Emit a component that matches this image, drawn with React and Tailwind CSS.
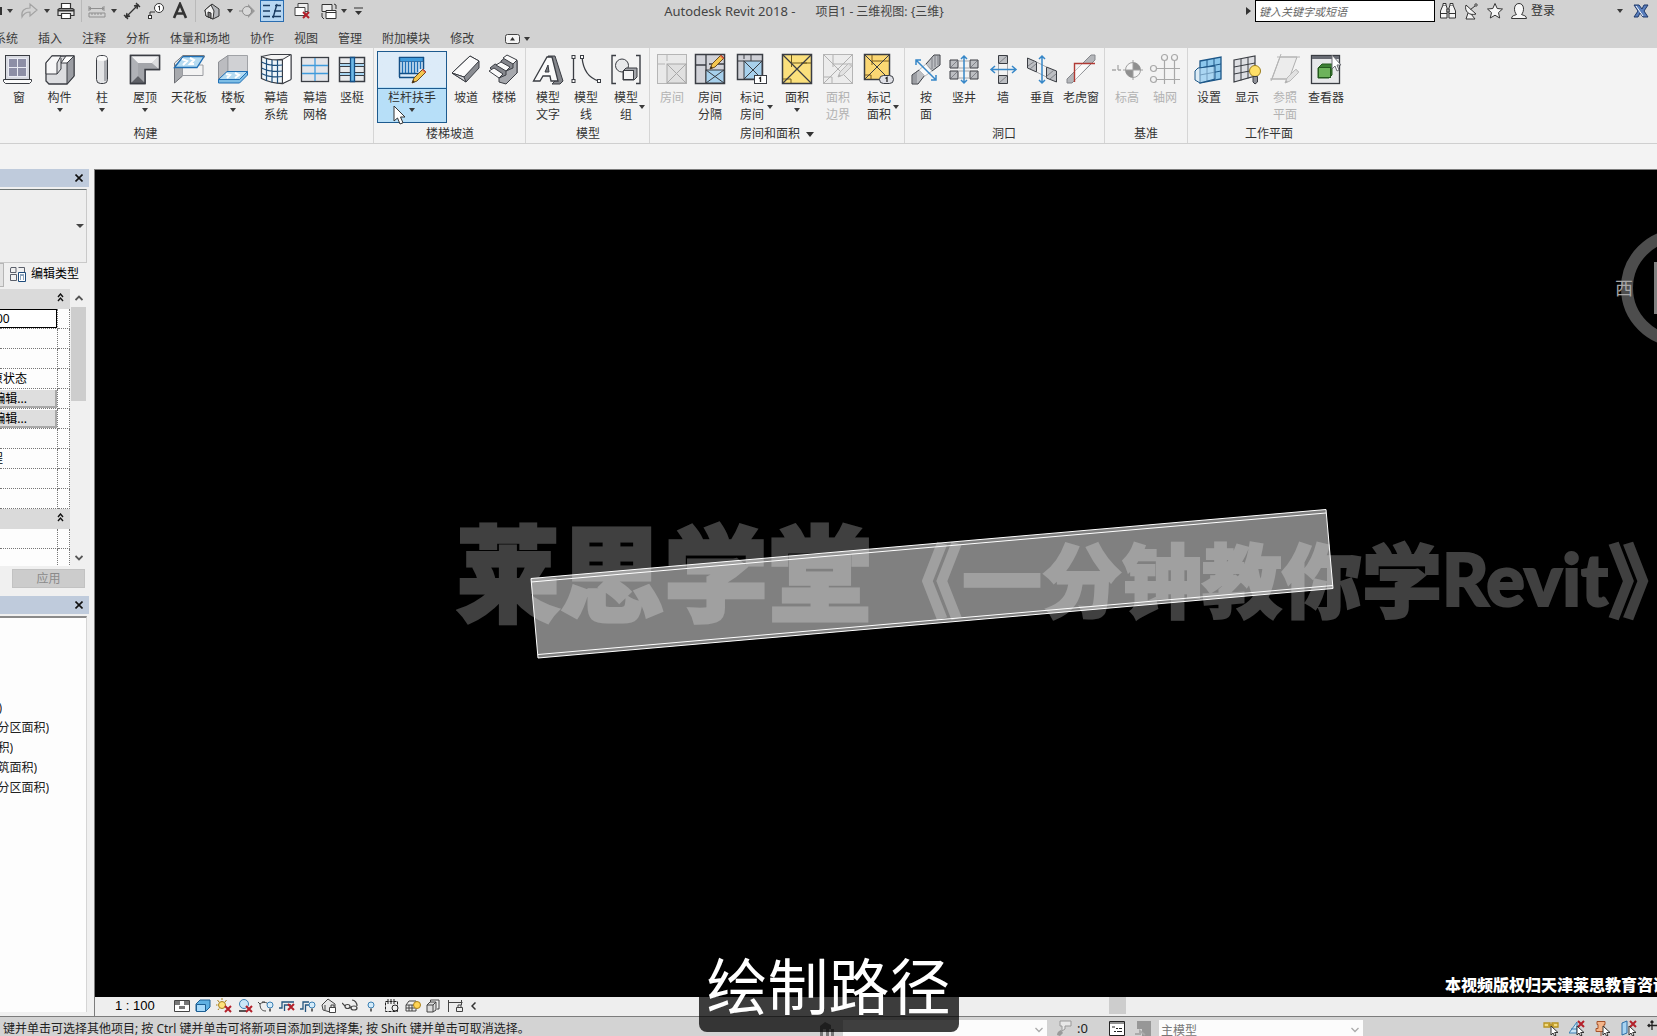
import React from "react";

const dark = "#3a3d43";
const blue = "#1f6fb5";
const pale = "#b5dbf2";

const Caret = ({ className = "text-[#3a3a3a]" }) => (
  <svg width="6" height="4" viewBox="0 0 6 4" className={className} fill="currentColor" aria-hidden="true">
    <path d="M0 0h6L3 4z" />
  </svg>
);

const Pencil = ({ x = 0, y = 0, gray }) => (
  <g transform={`translate(${x} ${y})`}>
    <path d="M1 15l2-5L12 1l3 3-9 9z" fill={gray ? "#e2e2e2" : "#f3c64f"} stroke={gray ? "#b9b9b9" : "#6b4a1e"} strokeWidth="1" />
    <path d="M11 2l1-1 3 3-1 1z" fill={gray ? "#cfcfcf" : "#e2574c"} />
    <path d="M1 15l1-3 2 2z" fill={gray ? "#b0b0b0" : "#3a2a16"} />
  </g>
);

// cruz de habitación: marco + aspa
const RoomCross = ({ x, y, w, h, fill, stroke }) => (
  <g stroke={stroke} strokeWidth="1">
    <rect x={x} y={y} width={w} height={h} fill={fill} />
    <path d={`M${x} ${y}l${w} ${h}M${x + w} ${y}l${-w} ${h}`} fill="none" />
  </g>
);

const Hatch = ({ d }) => <path d={d} fill="#bcbec2" stroke={dark} strokeWidth="1" />;

const art = {
  window: (
    <>
      <rect x="2.5" y="2.5" width="24" height="24" fill="#d9dbe2" stroke={dark} />
      <rect x="5.5" y="5.5" width="18" height="18" fill="#8d8fa6" stroke="#e9ebf3" />
      <path d="M14.500 6v17M6 14.500h17" stroke="#e9ebf3" />
      <path d="M.5 26.500h28v2l-2 2h-24l-2-2z" fill="#fafafa" stroke={dark} />
    </>
  ),
  component: (
    <>
      <path d="M2 10L8 3h22v20l-7 8H5l-3-3z" fill="#dcdde0" stroke={dark} strokeWidth="1.300" />
      <path d="M2 10L8 3h9l-4 7v11H2z" fill="#f6f6f7" stroke={dark} />
      <path d="M13 21l4-5V5" fill="none" stroke={dark} />
      <path d="M23 31V10l7-7v20z" fill="#9b9da3" stroke={dark} />
      <path d="M17 10l5-7h8l-7 7z" fill="#fff" stroke={dark} />
    </>
  ),
  column: (
    <>
      <rect x="10.500" y="2.500" width="11" height="28" rx="4" fill="#e3e4e6" stroke={dark} />
      <path d="M18 6h3v22h-3z" fill="#a9abb0" />
      <ellipse cx="16" cy="5.500" rx="5" ry="2.500" fill="#fafafa" />
    </>
  ),
  roof: (
    <>
      <path d="M1.500 2.500h29v14H16v14H1.500z" fill="#c3c5c9" stroke={dark} strokeWidth="1.400" />
      <path d="M2 3l7 7h14l7-7z" fill="#f3f3f4" />
      <path d="M2 3l7 7v13l-7 7z" fill="#b0b2b7" />
      <path d="M9 10h14l7 6H16v14l-7-7z" fill="#a3a5aa" />
      <path d="M23 10l7-7v13z" fill="#dddee0" />
      <path d="M2 30l7-7 7 7z" fill="#5f6167" />
      <path d="M1.500 2.500h29v14H16v14H1.500z" fill="none" stroke={dark} strokeWidth="1.400" />
    </>
  ),
  ceiling: (
    <>
      <path d="M1.500 13v17l8-7V6z" fill="#a7a9ad" stroke="#6c6e73" />
      <path d="M9.500 12H30v10.500H9.500z" fill="#f3f3f3" stroke="#9a9ca1" />
      <path d="M1.500 14.500L10 3.500h21l-7 11z" fill={pale} stroke={blue} strokeWidth="1.300" />
      <path d="M9 6l5 2-4 4M17 5l4 2-4 4h4" stroke="#fff" strokeWidth="2" fill="none" />
      <path d="M1.500 14v-4L10 2.500h21v2" stroke="#77797e" fill="none" />
    </>
  ),
  floor: (
    <>
      <path d="M1.500 26V9L11 2.500V19z" fill="#bbbcc0" stroke="#8d8f94" />
      <path d="M11 2.500h19.500V19H11z" fill="#d0d1d4" stroke="#a0a2a6" />
      <path d="M1.500 26.500L10 18.500h20.500l-8 8z" fill={pale} stroke={blue} />
      <path d="M9 21l4 1-3 3M18 20l4 2-4 3" stroke="#fff" strokeWidth="2" fill="none" />
      <path d="M1.500 26.500h21l8-8v3.500l-8 8h-21z" fill="#7dbde5" stroke={blue} />
    </>
  ),
  curtain: (
    <>
      <path d="M1.500 3.500L11 1.500H31v25l-8 4z" fill="#f4f4f4" stroke={dark} />
      <path d="M1.500 3.500c6 3 14 4 21 3v24c-8 0-15-2-21-5z" fill="#eff6fa" stroke={dark} strokeWidth="1.300" />
      <path d="M22.500 6.500L31 1.500v25l-8.500 4z" fill="#fff" stroke={dark} />
      <path d="M6.500 6v22M12 7v22.500M17.500 7v23.500M1.500 9c6 3 14 4 21 3M1.500 15c6 3 14 4 21 3M1.500 20.500c6 3 14 4 21 3" fill="none" stroke="#1d4f7c" strokeWidth="1.200" />
    </>
  ),
  grid: (
    <>
      <rect x="2.500" y="4.500" width="27" height="24" fill="#e4e5e9" stroke={dark} strokeWidth="1.300" />
      <path d="M16 5v23M3 12.500h26M3 20.500h26" stroke="#3f9bdc" strokeWidth="1.300" />
    </>
  ),
  mullion: (
    <>
      <rect x="3.500" y="4.500" width="25" height="24" fill="#e9eaec" stroke={dark} strokeWidth="1.500" />
      <path d="M3.500 10.500h25v3h-25zM3.500 19.500h25v3h-25z" fill="#a9d6f2" stroke={dark} />
      <path d="M14.500 4.500h4v24h-4z" fill="#6db7e6" stroke="#134f86" strokeWidth="1.300" />
    </>
  ),
  railing: (
    <>
      <path d="M3 4.500h25M3 8h25" stroke="#134f86" strokeWidth="1.400" />
      <path d="M4 5h23v3H4z" fill="#3f9bdc" />
      <path d="M3 20.500h20M3 24.500h16" stroke="#134f86" strokeWidth="1.400" />
      <path d="M3.500 4v20M27.500 4v12" stroke="#134f86" strokeWidth="1.500" />
      <path d="M6.500 8v12M9.500 8v12M12.500 8v12M15.500 8v12M18.500 8v12M21.500 8v11M24.500 8v8" stroke="#1f6fb5" strokeWidth="1.500" />
      <Pencil x={15} y={15} />
    </>
  ),
  ramp: (
    <>
      <path d="M2 20L20 3l9 5v7L16 29z" fill="#8b8d92" stroke={dark} />
      <path d="M2 20L20 3l9 5-15 16z" fill="#fbfbfb" stroke={dark} />
      <path d="M2 20l12 4 2 5z" fill="#d1d2d5" stroke={dark} />
    </>
  ),
  stair: (
    <>
      <path d="M2 15l5-4 6 2 0-5 6-5 10 5v12L18 30z" fill="#85878d" stroke={dark} />
      <path d="M15 5l4-3 10 5-4 4zM8 12l5-3 9 5-4 4zM1 18l5-3 9 6-4 4z" fill="#fafafa" stroke={dark} />
      <path d="M11 25v4l7 2 11-11V7l-4 4v4l-7 3v4z" fill="#a6a8ad" stroke={dark} />
    </>
  ),
  modelText: (
    <>
      <path d="M16 3h7l8 25-3 3h-8l3-3z" fill="#85878c" stroke={dark} />
      <path d="M1.500 28L15 4h5l6 24h-7l-1-5h-7l-3 5z" fill="#fbfbfb" stroke={dark} strokeWidth="1.300" />
      <path d="M13 19h4l-1-7z" fill="#77797e" stroke={dark} />
    </>
  ),
  modelLine: (
    <>
      <path d="M3.500 4v24M12 4c1 12 6 21 17 24" fill="none" stroke={dark} strokeWidth="1.300" />
      <g fill="#fff" stroke={dark}>
        <rect x="2" y="2.500" width="3" height="3" />
        <rect x="2" y="26.500" width="3" height="3" />
        <rect x="10.500" y="2.500" width="3" height="3" />
        <rect x="27.500" y="26.500" width="3" height="3" />
      </g>
    </>
  ),
  modelGroup: (
    <>
      <path d="M6 2.500H2v28h4M26 2.500h4v28h-4" fill="none" stroke={dark} strokeWidth="1.400" />
      <circle cx="12" cy="12.500" r="6.500" fill="#e8e9eb" stroke={dark} />
      <path d="M13 18l3-3h11v9l-3 3H13z" fill="#a3a5aa" stroke={dark} />
      <rect x="13.500" y="17.500" width="10" height="9" fill="#f4f4f5" stroke={dark} />
    </>
  ),
  room: (
    <>
      <rect x="1.500" y="1.500" width="29" height="29" fill="#e9e9e9" stroke="#b5b5b5" />
      <RoomCross x={11} y={11} w={19} h={19} fill="#e0e0e0" stroke="#a8a8a8" />
      <path d="M2 11h7M11 2v6" stroke="#b5b5b5" />
    </>
  ),
  roomSep: (
    <>
      <rect x="1.500" y="1.500" width="29" height="29" fill="#d2d3d9" stroke={dark} strokeWidth="1.500" />
      <path d="M12 2v28M2 12h10M15 11h15" stroke={dark} strokeWidth="1.300" />
      <RoomCross x={12} y={17} w={18} h={13} fill="#a7d0ec" stroke={dark} />
      <Pencil x={15} y={1} />
    </>
  ),
  tagRoom: (
    <>
      <rect x="1.500" y="1.500" width="25" height="25" fill="#cfd0d6" stroke={dark} strokeWidth="1.500" />
      <RoomCross x={8} y={8} w={18} h={18} fill="#a7d0ec" stroke={dark} />
      <path d="M2 8h6M8 2v4M15 8V2" stroke={dark} />
      <rect x="18.500" y="22.500" width="12" height="8" fill="#fff" stroke={dark} />
      <path d="M23 25.500l1.500-1V29" fill="none" stroke="#222" strokeWidth="1.300" />
    </>
  ),
  area: (
    <>
      <rect x="1.500" y="1.500" width="29" height="29" fill="#fbe07c" stroke={dark} strokeWidth="1.500" />
      <path d="M10.500 2v12M2 26h8v4M10 10h20M20 10h6" stroke="#6e5a1a" fill="none" />
      <path d="M2 2l28 28M30 2L2 30" stroke={dark} strokeWidth="1.200" />
    </>
  ),
  areaBoundary: (
    <>
      <rect x="1.500" y="1.500" width="29" height="29" fill="#ececec" stroke="#b5b5b5" />
      <path d="M2 2l28 28M30 2L2 30M11 2v12M11 11h19M2 24h8v6" stroke="#b0b0b0" fill="none" />
      <Pencil x={15} y={9} gray />
    </>
  ),
  tagArea: (
    <>
      <rect x="1.500" y="1.500" width="25" height="25" fill="#fbd773" stroke={dark} strokeWidth="1.500" />
      <path d="M9 2v10M9 8h17M2 22h6v4" stroke="#7c5a1a" fill="none" />
      <path d="M2 2l24 24M26 2L2 26" stroke={dark} />
      <rect x="16.500" y="22.500" width="14" height="8" rx="4" fill="#dfe0e6" stroke={dark} />
      <path d="M22.500 25.500l1.500-1V29" fill="none" stroke="#222" strokeWidth="1.300" />
    </>
  ),
  byFace: (
    <>
      <Hatch d="M2 22l7-5 6 5-7 9H2z" />
      <Hatch d="M16 11l8-9h6v10l-8 6z" />
      <path d="M4 30v-9M6 30V19M22 16V5M25 14V3M28 12V3" stroke="#7d7f85" />
      <path d="M9 17l7-6 6 7-7 5z" fill="#fafafa" stroke="#b6b8bc" />
      <path d="M6 7l20 20M6 12V7h5M26 22v5h-5" fill="none" stroke="#3687c8" strokeWidth="1.500" />
    </>
  ),
  shaft: (
    <>
      <Hatch d="M2 7h8v8H2z" />
      <Hatch d="M22 7h8v8h-8z" />
      <Hatch d="M2 18h8v8H2z" />
      <Hatch d="M22 18h8v8h-8z" />
      <path d="M3 14l6-6M3 25l6-6M23 14l6-6M23 25l6-6" stroke="#808288" />
      <path d="M10 8h12M10 15h12M10 18h12M10 25h12" stroke="#a5a7ab" />
      <path d="M16 3v27M13 6l3-3 3 3M13 27l3 3 3-3" fill="none" stroke="#3687c8" strokeWidth="1.500" />
    </>
  ),
  wall: (
    <>
      <Hatch d="M11.500 2.500h9v8h-9z" />
      <Hatch d="M11.500 22.500h9v8h-9z" />
      <path d="M12 10l8-7M12 30l8-7" stroke="#808288" />
      <path d="M11.500 11v11M20.500 11v11" stroke="#a5a7ab" />
      <path d="M5 16.500h23M8 13l-4 3.500L8 20M25 13l4 3.500-4 3.500" fill="none" stroke="#3687c8" strokeWidth="1.500" />
    </>
  ),
  vertical: (
    <>
      <Hatch d="M1.500 5l9 4v10l-9-4z" />
      <Hatch d="M20.500 14l10 4v11l-10-4z" />
      <path d="M2 13l7-5M4 16l6-5M21 23l7-6M24 26l6-5" stroke="#808288" />
      <path d="M10.500 9l10 5M10.500 19l10 5" stroke="#a5a7ab" />
      <path d="M16 3v27M13 6l3-3 3 3M13 27l3 3 3-3" fill="none" stroke="#3687c8" strokeWidth="1.500" />
    </>
  ),
  dormer: (
    <>
      <path d="M2 30v-4L26 2h4v5L7 30z" fill="#b4b6ba" stroke="#85878c" />
      <path d="M9 19l9-9h8L10 27z" fill="#fafafa" />
      <path d="M9.500 29V10.500H30" fill="none" stroke="#b13a34" strokeWidth="1.400" />
    </>
  ),
  level: (
    <>
      <path d="M1 17h4M7 17h3M7 12v5" stroke="#a8a8a8" strokeWidth="1.300" />
      <circle cx="22" cy="17" r="7.500" fill="#f4f4f4" stroke="#a0a0a0" />
      <path d="M22 17V9.500a7.500 7.500 0 0 1 7.500 7.500zM22 17v7.500a7.500 7.500 0 0 1-7.500-7.500z" fill="#8f8f8f" />
      <path d="M12 17h20M22 7v20" stroke="#a0a0a0" />
    </>
  ),
  axes: (
    <g fill="none" stroke="#a8a8a8" strokeWidth="1.200">
      <path d="M15.500 8v23M25.500 8v23M8 15.500h23M8 26.500h23" />
      <circle cx="15.500" cy="4.500" r="3" />
      <circle cx="25.500" cy="4.500" r="3" />
      <circle cx="4.500" cy="15.500" r="3" />
      <circle cx="4.500" cy="26.500" r="3" />
    </g>
  ),
  setPlane: (
    <>
      <path d="M7 8l21-4v22L7 30z" fill="#8cc7ec" stroke="#1c5687" strokeWidth="1.300" />
      <path d="M14 7v22M21 5.500v22M7 15l21-4M7 22l21-4" stroke="#1c5687" />
      <path d="M2 18l3-3 17-2v13L7 30l-5-3z" fill="#c7e5f7" fillOpacity=".5" stroke="#1c5687" />
    </>
  ),
  showPlane: (
    <>
      <path d="M3 7l21-4v20L3 29z" fill="#dedfe3" stroke={dark} strokeWidth="1.200" />
      <path d="M10 6v21.500M17 4.500v21M3 14l21-4M3 21l21-4" stroke={dark} />
      <circle cx="24" cy="18" r="5.500" fill="#ffe067" stroke="#9b7d1d" />
      <path d="M22 23.500h4.500V29L24 31l-2-2z" fill="#8f9198" stroke={dark} />
    </>
  ),
  refPlane: (
    <>
      <path d="M11 4h17l-8 22H3z" fill="#ececec" stroke="#b0b0b0" />
      <path d="M8 4h23M1 26h22M12 1L2 28" stroke="#b5b5b5" />
      <Pencil x={15} y={15} gray />
    </>
  ),
  viewer: (
    <>
      <rect x="1.500" y="2.500" width="28" height="28" fill="#e7e8ea" stroke={dark} strokeWidth="1.300" />
      <path d="M2 3h27v3H2z" fill="#686b73" />
      <path d="M8 15l4-4h13l-3 3v8l-3 3H8z" fill="#3c7f34" stroke="#245a1e" />
      <rect x="8.500" y="14.500" width="12" height="10" fill="#6db35b" stroke="#245a1e" />
      <path d="M22 2v14l3-3 2 5 2-1-2-5h4z" fill="#fff" stroke="#6d6f74" />
    </>
  ),
};

const panels = [
  {
    name: "构建",
    className: "pr-[2px]",
    labelClass: "pr-20",
    items: [
      { icon: "window", lines: ["窗"], w: "w-[38px]" },
      { icon: "component", lines: ["构件"], w: "w-[43px]", drop: "below" },
      { icon: "column", lines: ["柱"], w: "w-[42px]", drop: "below" },
      { icon: "roof", lines: ["屋顶"], w: "w-[44px]", drop: "below" },
      { icon: "ceiling", lines: ["天花板"], w: "w-[44px]" },
      { icon: "floor", lines: ["楼板"], w: "w-[44px]", drop: "below" },
      { icon: "curtain", lines: ["幕墙", "系统"], w: "w-[42px]" },
      { icon: "grid", lines: ["幕墙", "网格"], w: "w-[36px]" },
      { icon: "mullion", lines: ["竖梃"], w: "w-[38px]" },
    ],
  },
  {
    name: "楼梯坡道",
    className: "pl-[3px] pr-[2px]",
    items: [
      { icon: "railing", lines: ["栏杆扶手"], w: "w-[70px]", drop: "below", active: true },
      { icon: "ramp", lines: ["坡道"], w: "w-[38px]" },
      { icon: "stair", lines: ["楼梯"], w: "w-[38px]" },
    ],
  },
  {
    name: "模型",
    className: "pl-[3px] pr-[2px]",
    items: [
      { icon: "modelText", lines: ["模型", "文字"], w: "w-[38px]" },
      { icon: "modelLine", lines: ["模型", "线"], w: "w-[38px]" },
      { icon: "modelGroup", lines: ["模型", "组"], w: "w-[42px]", drop: "side" },
    ],
  },
  {
    name: "房间和面积",
    className: "px-[3px]",
    more: true,
    items: [
      { icon: "room", lines: ["房间"], w: "w-[38px]", disabled: true },
      { icon: "roomSep", lines: ["房间", "分隔"], w: "w-[38px]" },
      { icon: "tagRoom", lines: ["标记", "房间"], w: "w-[46px]", drop: "side" },
      { icon: "area", lines: ["面积"], w: "w-[44px]", drop: "below" },
      { icon: "areaBoundary", lines: ["面积", "边界"], w: "w-[38px]", disabled: true },
      { icon: "tagArea", lines: ["标记", "面积"], w: "w-[44px]", drop: "side" },
    ],
  },
  {
    name: "洞口",
    className: "pl-[2px] pr-[3px]",
    items: [
      { icon: "byFace", lines: ["按", "面"], w: "w-[38px]" },
      { icon: "shaft", lines: ["竖井"], w: "w-[38px]" },
      { icon: "wall", lines: ["墙"], w: "w-[40px]" },
      { icon: "vertical", lines: ["垂直"], w: "w-[38px]" },
      { icon: "dormer", lines: ["老虎窗"], w: "w-[40px]" },
    ],
  },
  {
    name: "基准",
    className: "px-[3px]",
    items: [
      { icon: "level", lines: ["标高"], w: "w-[38px]", disabled: true },
      { icon: "axes", lines: ["轴网"], w: "w-[38px]", disabled: true },
    ],
  },
  {
    name: "工作平面",
    className: "px-[2px]",
    last: true,
    items: [
      { icon: "setPlane", lines: ["设置"], w: "w-[38px]" },
      { icon: "showPlane", lines: ["显示"], w: "w-[38px]" },
      { icon: "refPlane", lines: ["参照", "平面"], w: "w-[38px]", disabled: true },
      { icon: "viewer", lines: ["查看器"], w: "w-[44px]" },
    ],
  },
];

const RibbonButton = ({ icon, lines, w, drop, active, disabled }) => (
  <button
    type="button"
    disabled={disabled}
    className={
      "relative flex h-[72px] shrink-0 flex-col items-center pt-[2px] text-xs leading-[17px] whitespace-nowrap " +
      w +
      (disabled ? " text-[#b2b2b2]" : " text-[#333]") +
      (active ? " bg-linear-to-b from-[#dcebf8] from-50% to-[#b7dff8] to-50% outline-1 -outline-offset-1 outline-[#1d5a8e]" : "")
    }
  >
    <svg width="32" height="32" viewBox="0 0 32 32" className="shrink-0" aria-hidden="true">{art[icon]}</svg>
    <span className={"flex w-full flex-col items-center " + (active ? "mt-[3px] border-t border-[#1d5a8e]" : "pt-1")}>
      {lines.map(l => <span key={l}>{l}</span>)}
      {drop === "below" && <span className="pt-[2px]"><Caret /></span>}
    </span>
    {drop === "side" && <span className="absolute right-[2px] bottom-[14px] flex"><Caret /></span>}
    {active && (
      <svg width="14" height="20" viewBox="0 0 14 20" className="absolute top-[54px] left-4" aria-hidden="true">
        <path d="M1 1v15l3.500-3 2.500 6 3-1.200-2.500-5.800H12z" fill="#fff" stroke="#333" />
      </svg>
    )}
  </button>
);

const Panel = ({ name, className, labelClass = "", items, more, last }) => (
  <section className={"flex shrink-0 flex-col " + className + (last ? "" : " border-r border-[#d5d5d5]")}>
    <div className="flex pt-[3px]">
      {items.map(i => <RibbonButton key={i.icon} {...i} />)}
    </div>
    <div className={"flex h-5 items-center justify-center gap-[6px] pt-[2px] text-xs leading-[18px] text-[#333] " + labelClass}>
      {name}
      {more && (
        <svg width="8" height="5" viewBox="0 0 8 5" aria-hidden="true"><path d="M0 0h8L4 5z" fill="#333" /></svg>
      )}
    </div>
  </section>
);

const RedX = ({ x, y }) => <path d={`M${x} ${y}l6 6M${x + 6} ${y}l-6 6`} stroke="#b3202a" strokeWidth="2" />;

const tools = [
  { label: "重做", w: "w-[22px]", d: <path d="M2 15c-1-6 2-9 8-9V2l7 6-7 6v-4c-4 0-6 1-8 5z" fill="none" stroke="#a3a3a3" strokeWidth="1.200" />, menu: "w-[14px]" },
  {
    label: "打印", w: "w-6", sep: true,
    d: <g stroke="#333" strokeWidth="1.200"><path d="M4.500 7V1.500h9V7" fill="#fff" /><path d="M1 7.500l1.500-1h13l1.500 1v6H1z" fill="#e2e2e2" /><path d="M1 8.500h16" strokeWidth="2" /><path d="M4.500 11.500h9v5h-9z" fill="#fff" /></g>,
  },
  { label: "测量", w: "w-[22px]", d: <path d="M1 4v5M16 4v5M1 6.500h15M3 5L1 6.500 3 8M14 5l2 1.500L14 8M1 11h16v4H1zM4 11v2M7 11v2M10 11v2M13 11v2" fill="none" stroke="#8f8f8f" />, menu: "w-3" },
  { label: "对齐标注", w: "w-6", d: <path d="M3 15L15 3M4 11l-1 4 4-1M14 7l1-4-4 1M1 13l4 4M13 1l4 4" fill="none" stroke="#333" strokeWidth="1.300" /> },
  { label: "标记", w: "w-6", d: <g fill="none" stroke="#333"><circle cx="12" cy="6" r="4.500" fill="#fff" /><path d="M11 5l1.500-1v4.500M8 10H3v5" /><rect x="1.500" y="13.500" width="3" height="3" fill="#fff" /></g> },
  { label: "文字", w: "w-6", sep: true, d: <path d="M3 16L9 2l6 14M5.500 11.500h7" fill="none" stroke="#333" strokeWidth="2.600" /> },
  { label: "三维视图", w: "w-6", d: <g stroke="#333"><path d="M2 8l7-6 7 5v7l-6 3-7-3z" fill="#b4b6ba" /><path d="M2 8l6-5 3 6-1 8-7-3z" fill="#f0f0f0" /><path d="M5 10l3 1v5l-3-1z" fill="#777" /></g>, menu: "w-3" },
  { label: "剖面", w: "w-6", d: <g><path d="M9 2l7 7-7 7z" fill="#9b9b9b" /><circle cx="8" cy="9" r="4.500" fill="#d9d9d9" stroke="#8c8c8c" /><path d="M0 9h3" stroke="#8c8c8c" /></g> },
  { label: "细线", w: "w-6", on: true, d: <path d="M0 3.500h7M0 9h7M0 14.500h7M10 16l4-14M12 3.500h6M11 9h7M9 14.500h9" fill="none" stroke="#1b3c62" strokeWidth="1.400" /> },
  { label: "关闭隐藏窗口", w: "w-9", d: <g stroke="#444"><path d="M5 1.500h10v8H5z" fill="#eee" /><path d="M2 5.500h10v8H2z" fill="#fff" /><RedX x={10} y={10} /></g> },
  { label: "切换窗口", w: "w-[18px]", d: <g stroke="#333"><path d="M2 2.500h10v7H2z" fill="#eee" /><path d="M6 8.500h10v8H6z" fill="#fff" /><path d="M6 10.500h10M14 2l2 1v4M2 11v4l2 2" fill="none" /></g>, menu: "w-3" },
];

const QuickAccess = () => (
  <div className="flex h-[22px] items-center">
    <span className="h-2 w-[2px] bg-[#333]" />
    <button type="button" aria-label="放弃选项" className="flex h-full w-4 items-center justify-center"><Caret /></button>
    {tools.map(t => (
      <React.Fragment key={t.label}>
        <button
          type="button"
          aria-label={t.label}
          className={"flex h-full items-center justify-center " + t.w + (t.on ? " border border-[#2a6db0] bg-[#b6d6f2]" : "")}
        >
          <svg width="18" height="18" viewBox="0 0 18 18" className="shrink-0">{t.d}</svg>
        </button>
        {t.menu && (
          <button type="button" aria-label={t.label + "选项"} className={"flex h-full items-center justify-center " + t.menu}><Caret /></button>
        )}
        {t.sep && <span className="mx-[3px] h-full w-[2px] border-l border-[#b9b9b9]" />}
      </React.Fragment>
    ))}
    <button type="button" aria-label="自定义快速访问工具栏" className="flex h-full w-4 items-center justify-center">
      <svg width="9" height="8" viewBox="0 0 9 8"><path d="M0 .5h9v1H0zM1 4h7L4.500 8z" fill="#333" /></svg>
    </button>
  </div>
);

const TitleBar = () => (
  <div className="flex h-[23px] items-start">
    <QuickAccess />
    <h1 className="flex flex-1 justify-center gap-5 pr-1 text-xs leading-[23px] whitespace-nowrap text-[#444]">
      <span className="text-[13px]">Autodesk Revit 2018 -</span>
      <span>项目1 - 三维视图: {"{三维}"}</span>
    </h1>
    <div className="flex h-[22px] items-center">
      <svg width="5" height="8" viewBox="0 0 5 8" className="mr-1" aria-hidden="true"><path d="M0 0l5 4-5 4z" fill="#333" /></svg>
      <input
        type="text"
        aria-label="搜索"
        placeholder="键入关键字或短语"
        className="h-[22px] w-[180px] border border-black bg-white px-[3px] text-[11px] italic placeholder-[#666] outline-none"
      />
      <button type="button" aria-label="查找" className="ml-1 w-[23px]">
        <svg width="18" height="18" viewBox="0 0 18 18" fill="#f4f4f4" stroke="#333"><path d="M1.500 16V9L4 3h3l1 3v10zM16.500 16V9L14 3h-3l-1 3v10z" /><path d="M8 7h2v3H8zM1.500 11.500H8M10 11.500h6.500M4 3V1.500h3V3M11 3V1.500h3V3" /></svg>
      </button>
      <button type="button" aria-label="通讯中心" className="w-6">
        <svg width="18" height="18" viewBox="0 0 18 18" fill="#f4f4f4" stroke="#333"><path d="M6 11l-2 6h9l-4-5" /><path d="M4 3c-2 6 3 11 10 9zM8.500 7.500L13 4" /><circle cx="14" cy="3" r="1.200" /></svg>
      </button>
      <button type="button" aria-label="收藏夹" className="w-6">
        <svg width="18" height="18" viewBox="0 0 18 18" fill="#f8f8f8" stroke="#333"><path d="M9 1.500l2.200 5 5.300.5-4 3.600 1.200 5.400L9 13.200 4.300 16l1.200-5.400-4-3.600 5.300-.5z" /></svg>
      </button>
      <button type="button" className="flex items-center gap-[3px] text-xs leading-[18px] text-[#333]">
        <svg width="18" height="18" viewBox="0 0 18 18" fill="#f8f8f8" stroke="#333" aria-hidden="true"><path d="M1.500 16.500c0-3 3-3 5-4-3-3-3-11 2.500-11s5.500 8 2.500 11c2 1 5 1 5 4z" /></svg>
        登录
      </button>
      <button type="button" aria-label="登录选项" className="ml-[62px]"><Caret /></button>
      <button type="button" aria-label="Exchange 应用" className="mr-2 ml-[10px]">
        <svg width="16" height="16" viewBox="0 0 16 16"><path d="M1 2h5l3 4 2-4h4l-4 6 4 6h-5L7 10l-2 4H1l4-6z" fill="#5a7fbd" stroke="#1d3768" /><path d="M3 3l7 10" stroke="#fff" /></svg>
      </button>
    </div>
  </div>
);

const tabs = ["插入", "注释", "分析", "体量和场地", "协作", "视图", "管理", "附加模块", "修改"];

const Tabs = () => (
  <nav className="flex h-[25px] items-end gap-5 text-xs leading-[18px] text-[#3b3b3b]">
    <button type="button" className="flex w-[18px] justify-end overflow-hidden whitespace-nowrap">系统</button>
    {tabs.map(t => <button type="button" key={t} className="whitespace-nowrap">{t}</button>)}
    <button type="button" aria-label="最小化功能区" className="ml-[11px] flex h-[18px] items-center gap-1">
      <svg width="15" height="10" viewBox="0 0 15 10"><rect x=".5" y=".5" width="14" height="9" rx="2" fill="#f4f4f4" stroke="#444" /><path d="M5 6.500h5L7.500 3z" fill="#333" /></svg>
      <Caret />
    </button>
  </nav>
);

const PaletteHeader = ({ label }) => (
  <div className="flex h-[18px] w-[89px] items-center justify-end bg-[#bfcbdc] pr-[6px]">
    <button type="button" aria-label={label}>
      <svg width="8" height="8" viewBox="0 0 8 8"><path d="M.5.5l7 7M7.500.5l-7 7" stroke="#111" strokeWidth="1.600" /></svg>
    </button>
  </div>
);

const cell = "h-5 border-r border-b border-dotted border-[#777] p-0";

const rows = [
  { text: "" },
  { text: "" },
  { text: "原状态", w: "w-[27px]" },
  { button: true },
  { button: true },
  { text: "" },
  { text: "程", w: "w-[3px]" },
  { text: "" },
  { text: "" },
];

const GroupRow = () => (
  <tr>
    <td colSpan="2" className="h-5 bg-[#dadada] p-0 pb-1">
      <svg width="7" height="9" viewBox="0 0 7 9" className="mr-[6px] ml-auto"><path d="M1 4l2.500-3L6 4M1 8l2.500-3L6 8" fill="none" stroke="#111" strokeWidth="1.400" /></svg>
    </td>
  </tr>
);

const Properties = () => (
  <section>
    <PaletteHeader label="关闭属性" />
    <div className="w-[87px]">
      <button type="button" aria-label="类型选择器" className="mt-[2px] flex h-[74px] w-full items-center justify-end border-t border-r border-b border-t-[#6d7575] border-r-[#c9c9c9] border-b-[#c9c9c9] bg-[#eee] pr-[2px]">
        <svg width="8" height="4" viewBox="0 0 8 4"><path d="M0 0h8L4 4z" fill="#444" /></svg>
      </button>
      <div className="flex h-[26px] items-start">
        <span className="h-6 w-1 border border-l-0 border-[#b5b5b5] bg-[#e3e3e3]" />
        <button type="button" className="ml-[6px] flex items-center gap-[5px] pt-[2px] text-xs leading-[18px] whitespace-nowrap text-black">
          <svg width="16" height="16" viewBox="0 0 16 16" fill="none" stroke="#5a5f6a" aria-hidden="true"><path d="M1 1.500h5v5H.5V3zM8.500 1.500h6v5M.5 8.500h6v6h-6z" /><path d="M8.500 6.500h7v9h-7z" fill="#fff" stroke="#1d4a7a" /><path d="M10 9h4M10 11h1M13 11h1M10 13h1M13 13h1" stroke="#1d4a7a" /></svg>
          编辑类型
        </button>
      </div>
      <div className="flex h-[277px] overflow-hidden">
        <table className="w-[70px] shrink-0 table-fixed border-separate border-spacing-0 self-start bg-[#fdfdfd] text-xs leading-[18px]">
          <colgroup>
            <col className="w-[58px]" />
            <col className="w-3" />
          </colgroup>
          <tbody>
            <GroupRow />
            <tr>
              <td className={cell}>
                <input type="text" aria-label="参数值" defaultValue="00" className="block h-[19px] w-full border border-l-0 border-black bg-white -indent-1 text-xs outline-none" />
              </td>
              <td className={cell} />
            </tr>
            {rows.map((r, i) => (
              <tr key={i}>
                <td className={cell}>
                  {r.button ? (
                    <button type="button" className="flex h-[18px] w-[57px] items-center border-r-2 border-b-2 border-[#a9a9a9] bg-[#dedede] pt-[2px]">
                      <span className="flex w-[27px] justify-end overflow-hidden whitespace-nowrap">编辑...</span>
                    </button>
                  ) : (
                    r.text && <span className={"flex justify-end overflow-hidden whitespace-nowrap " + r.w}>{r.text}</span>
                  )}
                </td>
                <td className={cell} />
              </tr>
            ))}
            <GroupRow />
            <tr><td className={cell} /><td className={cell} /></tr>
            <tr><td className={cell} /><td className={cell} /></tr>
          </tbody>
        </table>
        <div className="flex w-[17px] flex-col items-center bg-[#f0f0f0]">
          <svg width="8" height="6" viewBox="0 0 8 6" className="my-[6px] shrink-0"><path d="M.5 5L4 1.500 7.500 5" fill="none" stroke="#555" strokeWidth="1.800" /></svg>
          <span className="h-[94px] w-[15px] shrink-0 bg-[#cdcdcd]" />
          <svg width="8" height="6" viewBox="0 0 8 6" className="mt-auto mb-[5px] shrink-0"><path d="M.5 1L4 4.500 7.500 1" fill="none" stroke="#555" strokeWidth="1.800" /></svg>
        </div>
      </div>
      <div className="flex h-[30px] justify-end pt-[3px] pr-[2px]">
        <button type="button" disabled className="h-[19px] w-[73px] border border-[#c2c2c2] bg-[#cccccc] text-xs leading-[17px] text-[#8a8a8a]">应用</button>
      </div>
    </div>
  </section>
);

const views = [
  { text: ")", w: "w-[2px]" },
  { text: "分区面积)", w: "w-[49px]" },
  { text: "积)", w: "w-[13px]" },
  { text: "筑面积)", w: "w-[37px]" },
  { text: "分区面积)", w: "w-[49px]" },
];

const Browser = () => (
  <section className="flex flex-1 flex-col">
    <PaletteHeader label="关闭项目浏览器" />
    <ul className="mt-[2px] mb-1 w-[87px] flex-1 border-t-2 border-r border-t-[#8a8a8a] border-r-[#d5d5d5] bg-[#fdfdfd] pt-[80px] text-xs leading-5 text-[#222]">
      {views.map((v, i) => (
        <li key={i} className={"flex justify-end overflow-hidden whitespace-nowrap " + v.w}>{v.text}</li>
      ))}
    </ul>
  </section>
);

const Canvas = () => (
  <main className="relative min-h-0 flex-1 overflow-hidden bg-black">
    {/* losa en vista 3D */}
    <svg width="1250" height="540" viewBox="0 0 1250 540" className="absolute top-0 left-0" aria-hidden="true">
      <path d="M436 408.500L1231 339.500 1238 418.500 443 488z" fill="#808080" stroke="#fff" />
      <path d="M436 412L1231 343M443 484.500L1238 415.500" stroke="#fff" />
    </svg>
    <div className="absolute top-[328px] left-[361px] flex items-center text-[104px] leading-[140px] font-black whitespace-nowrap text-white opacity-25 [-webkit-text-stroke:3px_white]">
      <span>莱思学堂</span>
      <span className="ml-[10px] pt-3 text-[80px] [-webkit-text-stroke:2px_white]">《一分钟教你学</span>
      <span className="pt-2 font-['Lato'] text-[72px] [-webkit-text-stroke:2px_white]">Revit</span>
      <span className="pt-3 text-[80px] [-webkit-text-stroke:2px_white]">》</span>
    </div>
    <div className="absolute top-[59px] right-[-82px] size-[118px] rounded-full border-[12px] border-[#4d4d4d]" />
    <div className="absolute top-[92px] right-0 h-[52px] w-[3px] bg-[#808080]" />
    <span className="absolute top-[106px] right-6 text-lg leading-6 text-[#a8a8a8]">西</span>
    <p className="absolute right-[-12px] bottom-0 text-base leading-6 font-black whitespace-nowrap text-white">本视频版权归天津莱思教育咨询</p>
  </main>
);

const Bulb = ({ x = 10 }) => <g><circle cx={x} cy="7" r="3" fill="#d5ecfa" stroke="#3a7fb3" /><path d={`M${x - 1} 10.500h2v3h-2z`} fill="#666" /></g>;

const viewIcons = [
  ["详细程度", <g><path d="M.5 2.500h15v11H.5z" fill="#fff" stroke="#444" /><path d="M1 3h5v4H1zM10 3h5v4h-5zM5 8h6v3H5z" fill="#777" /></g>],
  ["视觉样式", <g stroke="#1c5f94"><path d="M1 6l4-4h10v7l-4 4H1z" fill="#5fb0e2" /><path d="M1.500 6.500h9v7h-9z" fill="#a8dafa" /></g>],
  ["日光路径", <g><circle cx="6" cy="7" r="3.500" fill="#ffe37b" stroke="#a8801c" /><path d="M6 0v2M0 7h1.500M1.500 2l1.500 2M10.500 2L9 4M2 12l1-1.500" stroke="#a8801c" /><RedX x={9} y={8} /></g>],
  ["阴影", <g><circle cx="7" cy="6" r="4.500" fill="#cbe6f7" stroke="#3a7fb3" /><path d="M2 13h7" stroke="#555" strokeWidth="2" /><RedX x={9} y={8} /></g>],
  ["渲染", <g><path d="M0 4l2 2c0 5 2 7 6 7M2 6c2-2 5-2 7-1M4 4h3" fill="none" stroke="#444" /><Bulb x={12} /></g>],
  ["裁剪视图", <g><path d="M0 10h3V4h12M5.500 13V7H12" fill="none" stroke="#24557f" strokeWidth="1.300" /><RedX x={9} y={6} /></g>],
  ["显示裁剪区域", <g><path d="M0 11h3V4h6M5.500 14V7H9" fill="none" stroke="#24557f" strokeWidth="1.300" /><Bulb x={12} /></g>],
  ["锁定三维视图", <g stroke="#444"><path d="M1 7l6-6 7 5v5H9v3l-7-2z" fill="#e5e5e5" /><path d="M4 7v5" /><path d="M8.500 9.500h6v5h-6z" fill="#fff" /><path d="M10 9V7h3v2" fill="none" /></g>],
  ["临时隐藏", <g fill="none" stroke="#444" strokeWidth="1.200"><path d="M0 5l3 3M8 9l1 1M10 2c3 0 5 3 5 6" /><ellipse cx="5.500" cy="8.500" rx="2.500" ry="2" /><ellipse cx="12" cy="10" rx="3" ry="2" /></g>],
  ["显示隐藏图元", <Bulb x={8} />],
  ["临时视图属性", <g fill="none" stroke="#222"><path d="M1.500 3.500h12v10h-12z" strokeDasharray="3 1" /><circle cx="11" cy="10" r="3" fill="#eee" /><path d="M4 1v5M7 1v5M10 1v5" /></g>],
  ["分析模型", <g><path d="M1 7l3-4h7v10H1zM4 7v6M7 7v6M1 7h9M1 10h9" fill="none" stroke="#444" /><circle cx="12" cy="7" r="3.500" fill="#ffd454" stroke="#a8801c" /></g>],
  ["位移集", <g stroke="#444"><path d="M1 7l3-3h6v8l-3 2H1z" fill="#ddd" /><path d="M1 7h6v7M7 7l3-3" fill="none" /><path d="M4.500 4V2H13v9h-2" fill="none" /></g>],
  ["约束", <g fill="none" stroke="#444"><path d="M1.500 2v12M1.500 4.500h14M14.500 2v5" /><path d="M9.500 9.500h6v4h-6zM11 9V7h3v2" /></g>],
];

const ViewBar = () => (
  <div className="flex h-[19px] items-center bg-[#eeeeee] pb-[2px]">
    <button type="button" className="w-[76px] pl-5 text-left font-['Liberation_Sans'] text-[13px] leading-[17px] whitespace-nowrap text-black">1 : 100</button>
    {viewIcons.map(([label, d]) => (
      <button type="button" key={label} aria-label={label} className="flex w-[21px] justify-center">
        <svg width="16" height="16" viewBox="0 0 16 16">{d}</svg>
      </button>
    ))}
    <button type="button" aria-label="收起" className="flex w-4 justify-center">
      <svg width="5" height="8" viewBox="0 0 5 8"><path d="M4.500.5L1 4l3.500 3.500" fill="none" stroke="#333" strokeWidth="1.500" /></svg>
    </button>
    <div className="ml-auto flex h-[17px] w-[548px]"><span className="w-[17px] bg-[#cdcdcd]" /></div>
  </div>
);

const Combo = ({ label, options }) => (
  <div className="relative">
    <select aria-label={label} className="block h-[22px] w-[204px] appearance-none bg-[#fcfcfc] pl-[2px] text-xs text-[#777] outline-none">
      {options.map(o => <option key={o}>{o}</option>)}
    </select>
    <svg width="8" height="6" viewBox="0 0 8 6" className="pointer-events-none absolute top-[7px] right-[4px]"><path d="M.5 1L4 4.500 7.500 1" fill="none" stroke="#aaa" strokeWidth="1.300" /></svg>
  </div>
);

const Pointer = () => <path d="M8 6v9l2-2 1.500 3 1.500-.7-1.300-2.800H15z" fill="#fff" stroke="#333" />;

const selectIcons = [
  ["选择链接", <g><path d="M1 3h6v4H1zM9 3h6v4H9zM5 5h6" fill="#f3dc82" stroke="#b8921f" strokeWidth="1.300" /><Pointer /></g>],
  ["选择基线图元", <g><path d="M0 13L8 2v11zM2 9h6" fill="#cbe6f7" stroke="#3a7fb3" /><RedX x={9} y={1} /><Pointer /></g>],
  ["选择锁定图元", <g><path d="M2 1.500h8v3H9v4h2v3H1v-3h2v-4H2zM6 12v4" fill="#f3b58a" stroke="#a5522a" /><Pointer /></g>],
  ["按面选择图元", <g><path d="M1 3l5-2v12l-5 2z" fill="#a8d4f2" stroke="#2a6da5" /><RedX x={9} y={1} /><Pointer /></g>],
];

const StatusBar = () => (
  <footer className="flex h-5 items-start overflow-hidden border-t border-[#7c7c7c] bg-[#d3d3d3] text-xs text-[#222]">
    <p className="min-w-0 flex-1 pl-[3px] leading-6 whitespace-nowrap">键并单击可选择其他项目; 按 Ctrl 键并单击可将新项目添加到选择集; 按 Shift 键并单击可取消选择。</p>
    <div className="flex w-[838px] shrink-0 items-start pt-[3px]">
      <svg width="16" height="16" viewBox="0 0 16 16" className="mr-2" aria-hidden="true"><path d="M1 6l5-4 6 3v4H1zM1 9h3v7H1zM7 9h3v7H7zM12 9h3v7h-3z" fill="#777" /></svg>
      <Combo label="工作集" options={[""]} />
      <svg width="16" height="16" viewBox="0 0 16 16" className="ml-[9px]" aria-hidden="true"><path d="M4 1h11v5H9v3l-3 2V6H4z" fill="#e8e8e8" stroke="#999" /><path d="M1 15c0-3 2-4 4-5l2 3-3 3z" fill="#9a9a9a" /></svg>
      <span className="ml-[5px] w-8 text-[13px] leading-[17px]">:0</span>
      <button type="button" aria-label="设计选项">
        <svg width="16" height="16" viewBox="0 0 16 16"><path d="M.5 1.500h15v14H.5z" fill="#fff" stroke="#222" /><path d="M1 3h14" stroke="#222" /><path d="M3 7h3M7 8.500h2M10 8.500h3M5 11.500h2M8 11.500h5" stroke="#222" strokeWidth="1.200" /></svg>
      </button>
      <svg width="16" height="16" viewBox="0 0 16 16" className="mr-2 ml-[10px]" aria-hidden="true"><path d="M2 1h14v15H7V9H2z" fill="#979797" /><path d="M0 14h5v-3l5 4" stroke="#aaa" fill="none" strokeWidth="2" /></svg>
      <Combo label="活动设计选项" options={["主模型"]} />
      <div className="ml-auto flex gap-[10px]">
        {selectIcons.map(([label, d]) => (
          <button type="button" key={label} aria-label={label}><svg width="16" height="16" viewBox="0 0 16 16">{d}</svg></button>
        ))}
        <button type="button" aria-label="拖曳图元">
          <svg width="10" height="16" viewBox="0 0 10 16"><path d="M5 1v9M1 5.500h9M3.500 2.500L5 1l1.500 1.500M2.500 4L1 5.500 2.500 7" fill="none" stroke="#222" strokeWidth="1.300" /></svg>
        </button>
      </div>
    </div>
  </footer>
);

export default function App() {
  return (
    <div className="relative flex h-screen flex-col overflow-hidden bg-[#f3f3f3] font-['Noto_Sans','Noto_Sans_CJK_SC',sans-serif]">
      <header>
        <div className="bg-[#d2d2d2]">
          <TitleBar />
          <Tabs />
        </div>
        <div className="flex h-24 border-b border-[#cfcfcf]">
          {panels.map(p => <Panel key={p.name} {...p} />)}
        </div>
        <div className="h-[25px]" />
      </header>
      <div className="flex min-h-0 flex-1">
        <aside className="flex w-[94px] shrink-0 flex-col bg-[#f0f0f0]">
          <Properties />
          <Browser />
        </aside>
        <div className="flex min-w-0 flex-1 flex-col border-t border-l border-[#7c7c7c]">
          <Canvas />
          <ViewBar />
        </div>
      </div>
      <StatusBar />
      <div className="absolute bottom-1 left-1/2 -translate-x-1/2 rounded-lg bg-black/75 px-2 text-[61px] leading-[90px] whitespace-nowrap text-white">绘制路径</div>
    </div>
  );
}
